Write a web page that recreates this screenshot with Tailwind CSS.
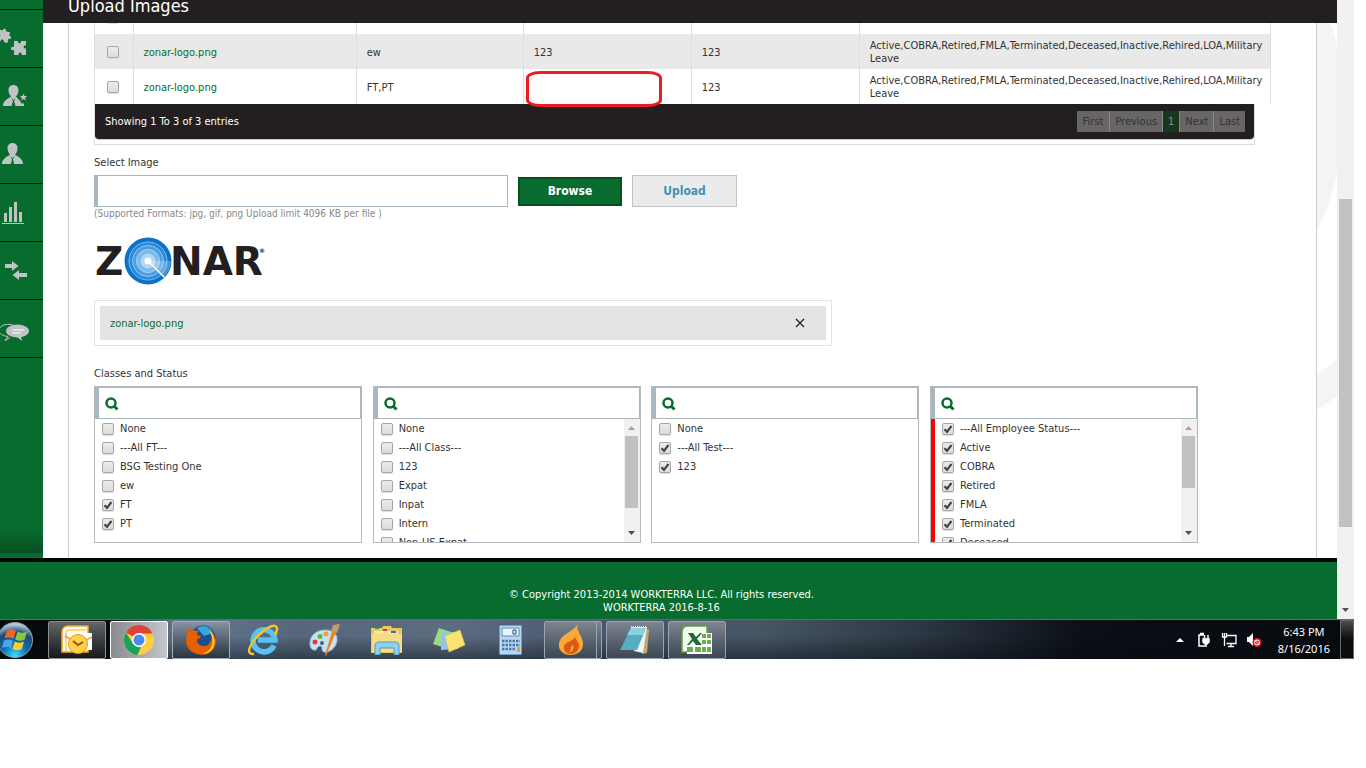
<!DOCTYPE html>
<html lang="en">
<head>
  <meta charset="UTF-8">
  <title>Upload Images</title>
  <script src="https://cdn.jsdelivr.net/npm/@tailwindcss/browser@4"></script>
</head>
<body class="bg-white text-[#333] text-[11px] leading-[13px] font-['DejaVu_Sans_Condensed','Liberation_Sans',sans-serif]">
  <div class="mr-3 overflow-hidden">

    <!-- browser viewport -->
    <div class="flex">
      <div class="flex-1 min-w-0">
        <div class="flex">

          <!-- sidebar -->
          <nav class="w-[43px] shrink-0 bg-[#086c2e] flex flex-col overflow-hidden text-[#bfc3c6]">
            <a href="#" aria-label="Home" class="-mt-12 h-[58px] shrink-0 border-b border-[#06210f]"></a>
            <a href="#" aria-label="Modules" class="h-[58px] shrink-0 border-b border-[#06210f] flex items-center pt-2">
              <svg width="30" height="30" viewBox="0 0 30 30" fill="currentColor">
                <path transform="translate(-3 1) rotate(14 7 7)" d="M1 2h3.500c-1-3 4-3 3 0H12v3.500c3-1 3 4 0 3V13H8c1-3-4-3-3 0H1V9c3 1 3-4 0-3z"/>
                <path transform="translate(11 12)" d="M3 1h4.200c-1.500 3 4 3 2.600 0H15v4.500c-3-1.500-3 4 0 3V15h-4.500c1.500-3.500-4-3.500-2.800 0H3v-5c-4 1.600-4-4.500 0-3z"/>
              </svg>
            </a>
            <a href="#" aria-label="Favourite employee" class="h-[58px] shrink-0 border-b border-[#06210f] flex items-center">
              <svg width="30" height="24" viewBox="0 0 30 24" fill="currentColor">
                <path d="M13.500 0c3.200 0 5 2.200 5 5.200 0 2.600-1 4.800-2.200 5.800v2l-2.800 2-2.800-2v-2C9.500 10 8.500 7.800 8.500 5.200c0-3 1.800-5.200 5-5.200z"/>
                <path d="M10.500 12l2.500 4-1.500 5H3c0-4 2.500-6 7.500-9zM16.500 12l3.500 4 1.500 2.500H24V21h-8.500L14 16z"/>
                <path d="M23.500 8.500l1 2.600 2.700.1-2.100 1.700.7 2.600-2.300-1.500-2.300 1.500.7-2.600-2.100-1.700 2.700-.1z"/>
              </svg>
            </a>
            <a href="#" aria-label="Employee" class="h-[58px] shrink-0 border-b border-[#06210f] flex items-center">
              <svg width="30" height="24" viewBox="0 0 30 24" fill="currentColor">
                <path d="M12.500 0c3.200 0 5 2.200 5 5.200 0 2.600-1 4.800-2.200 5.800v2l-2.800 2-2.800-2v-2C8.500 10 7.500 7.800 7.500 5.200c0-3 1.800-5.200 5-5.200z"/>
                <path d="M9.500 12l2.500 4-1 5H2c0-4 2.500-6 7.500-9zM15.500 12c5 3 7.500 5 7.500 9h-9l-1-5z"/>
              </svg>
            </a>
            <a href="#" aria-label="Reports" class="h-[58px] shrink-0 border-b border-[#06210f] flex items-center">
              <svg width="30" height="24" viewBox="0 0 30 24" fill="currentColor">
                <path d="M4 12h3v9H4zM9 6h3v15H9zM14 1h3v20h-3zM19 11h3v10h-3zM2 22h22v1H2z"/>
              </svg>
            </a>
            <a href="#" aria-label="Transfer" class="h-[58px] shrink-0 border-b border-[#06210f] flex items-center">
              <svg width="30" height="20" viewBox="0 0 30 20" fill="currentColor">
                <path d="M5 3h7V0l6.500 5-6.500 5V7H5zM27 12h-8V9l-6.500 5 6.500 5v-3h8z"/>
              </svg>
            </a>
            <a href="#" aria-label="Messages" class="h-[58px] shrink-0 border-b border-[#06210f] flex items-center pt-2">
              <svg width="30" height="20" viewBox="0 0 30 20" fill="currentColor">
                <path d="M13 2C5 0-1 3-1 7.500c0 3 4 5.500 9 6l-3 4 5-3" fill="none" stroke="currentColor"/>
                <ellipse cx="17.500" cy="8" rx="11.500" ry="6.500"/>
                <path d="M17 14l5 4-1-5z"/>
                <path d="M12 7h12M12 10h9" stroke="#fff"/>
              </svg>
            </a>
            <div class="flex-1"></div>
            <div class="h-6 mb-[5px] bg-linear-to-b from-[#086c2e] to-[#075023]"></div>
          </nav>

          <!-- main column -->
          <main class="flex-1 min-w-0 relative">
            <svg class="absolute right-0 top-0" width="20" height="420" viewBox="0 0 20 420" fill="#f4f4f4">
              <path d="M0 23h13c10 25 14 60 14 80 0 50-10 95-27 127z"/>
              <path d="M0 375l20-16v37L0 410z"/>
            </svg>

            <div class="relative z-10 -mt-3 h-[35px] bg-[#231f20] pl-[25px] flex items-center">
              <h1 class="text-white text-lg">Upload Images</h1>
            </div>

            <div class="relative -mt-6 ml-[25px] mr-5 border-x border-[#ccc] bg-white pl-[25px] pr-[61px] pb-[15px]">
              <!-- image table -->
              <div class="border border-t-0 border-[#ddd] pb-[5px]">
                <table class="w-[calc(100%+17px)] table-fixed border-collapse">
                  <colgroup>
                    <col class="w-[38px]"><col class="w-[19%]"><col class="w-[167px]"><col class="w-[168px]"><col class="w-[168px]"><col class="w-[35%]">
                  </colgroup>
                  <tbody id="images"></tbody>
                </table>
                <div class="h-[35px] bg-[#231f20] rounded-b shadow-[0_1px_0_#ccc] flex items-center justify-between pl-[10px] pr-[9px] text-white">
                  <span>Showing 1 To 3 of 3 entries</span>
                  <div class="flex h-[21px] text-[#333] divide-x divide-[#8a8888]">
                    <button class="bg-[#686566] px-[6px]">First</button>
                    <button class="bg-[#686566] px-[5px]">Previous</button>
                    <button class="bg-[#17381f] px-[5px] text-[#8b8b8b]">1</button>
                    <button class="bg-[#686566] px-[5px]">Next</button>
                    <button class="bg-[#686566] px-[5px]">Last</button>
                  </div>
                </div>
              </div>

              <!-- upload form -->
              <label for="file" class="block mt-[11px]">Select Image</label>
              <div class="mt-[6px] flex items-center gap-[10px]">
                <input id="file" type="text" class="w-[414px] h-8 border border-l-4 border-[#a9b8c0] px-2">
                <button class="w-[104px] h-[29px] bg-[#086c2e] border-2 border-[#05501f] text-white text-xs font-bold">Browse</button>
                <button class="w-[105px] h-8 bg-[#ebebeb] border border-[#c3c3c3] text-[#4690b5] text-xs font-bold">Upload</button>
              </div>
              <p class="text-[10px] text-[#888]">(Supported Formats: jpg, gif, png Upload limit 4096 KB per file )</p>

              <svg class="mt-[14px]" width="176" height="56" viewBox="0 0 176 56" role="img" aria-label="Zonar">
                <g fill="#231f20" class="font-['DejaVu_Sans',sans-serif] font-bold">
                  <text x="1" y="41" font-size="39">Z</text>
                  <text x="76" y="41" font-size="39">NAR</text>
                  <text x="165" y="19" font-size="6">®</text>
                </g>
                <circle cx="54" cy="27" r="23.500" fill="#0a72c8"/>
                <circle cx="54" cy="27" r="19" fill="#2b8ad6" stroke="#7dbcec"/>
                <circle cx="54" cy="27" r="15.500" fill="#4b9fe0" stroke="#8cc4ee"/>
                <circle cx="54" cy="27" r="11.500" fill="#7cbaea" stroke="#a9d4f4"/>
                <circle cx="54" cy="27" r="7.500" fill="#b0d6f4"/>
                <path d="M54 27L77 27A23 23 0 0 1 70 43z" fill="#fff" opacity=".25"/>
                <circle cx="54" cy="27" r="3.500" fill="#fff"/>
                <path d="M54 27l16.500 16.500" stroke="#fff" stroke-width="1.500"/>
              </svg>

              <div class="mt-[10px] w-[738px] border border-[#e3e3e3] p-[5px]">
                <div class="h-[34px] bg-[#e4e4e4] flex items-center justify-between pl-[10px] pr-[21px]">
                  <a href="#" class="text-[#086c2e]">zonar-logo.png</a>
                  <button aria-label="Remove">
                    <svg width="10" height="10" viewBox="0 0 10 10" stroke="#222" stroke-width="1.300"><path d="M1 1l8 8M9 1L1 9"/></svg>
                  </button>
                </div>
              </div>

              <h2 class="mt-[21px]">Classes and Status</h2>
              <div id="lists" class="mt-[6px] flex justify-between w-[1104px]"></div>
            </div>
          </main>
        </div>

        <footer class="border-t-4 border-[#060606] bg-[#086c2e] text-white text-center h-[61px] pt-[26px] pr-[14px]">
          <p>© Copyright 2013-2014 WORKTERRA LLC. All rights reserved.</p>
          <p>WORKTERRA 2016-8-16</p>
        </footer>
      </div>

      <!-- page scrollbar -->
      <div class="w-[17px] shrink-0 bg-[#f1f1f1] flex flex-col items-center pb-[7px]">
        <div class="h-[199px]"></div>
        <div class="h-[328px] w-[13px] bg-[#c1c1c1]"></div>
        <div class="flex-1"></div>
        <svg width="7" height="4" viewBox="0 0 7 4" fill="#505050"><path d="M0 0h7L3.500 4z"/></svg>
      </div>
    </div>

    <!-- taskbar -->
    <div class="h-10 border-t border-[#5b6a70] bg-[linear-gradient(to_bottom,transparent_40%,rgba(5,10,15,0.45)),linear-gradient(to_right,#070a0c_8%,#66788f_13%,#56677c_22%,#5d6d80_33%,#45546a_46%,#475565_56%,#2c3743_68%,#0b0f16_80%,#070b0f)] flex items-center">
      <button aria-label="Start" class="w-12 shrink-0">
        <svg width="35" height="38" viewBox="0 0 35 38">
          <defs>
            <radialGradient id="orb" cx=".5" cy=".95" r=".9"><stop offset="0" stop-color="#3fe0ff"/><stop offset=".4" stop-color="#0d6fae"/><stop offset=".75" stop-color="#1d4a73"/><stop offset="1" stop-color="#b5cbda"/></radialGradient>
          </defs>
          <circle cx="15" cy="19" r="17.500" fill="url(#orb)" stroke="#7ea4bb"/>
          <path d="M7 9.500c3-2 6-1.500 9 .2l-2.500 8c-3-1.500-6-1.700-9-.2z" fill="#f0642c"/>
          <path d="M17.500 10.500c3 1.500 6 1.700 9.500.2l-2.500 8c-3 1.500-6 1.300-9.300-.2z" fill="#8cc63f"/>
          <path d="M4 19.500c3-1.500 6-1.300 9 .2l-2.200 7.500c-3-1.700-5.500-1.700-8.800-.2z" fill="#4aa8e8"/>
          <path d="M14.700 20.500c3 1.500 6 1.700 9.300.2l-2.300 7.500c-3 1.500-6 1.500-9.200-.2z" fill="#ffcc2f"/>
        </svg>
      </button>
      <div class="flex gap-1">
        <button aria-label="Outlook" class="w-[58px] h-[38px] rounded-xs border border-[#8b8f92] bg-linear-to-b from-[#63676a] to-[#17191b] grid place-items-center">
          <svg width="32" height="30" viewBox="0 0 32 30">
            <path d="M1 27V7c0-4 3-6 6-6h20v26z" fill="#fff7df" stroke="#f0a829" stroke-width="1.500"/>
            <path d="M5 26V9c0-3 1-4 4-4h16" fill="none" stroke="#f0b84c"/>
            <path d="M7 8h24v17H7z" fill="#fff"/><path d="M4 11l14 8 13-7" fill="none" stroke="#e8a53a" stroke-width="1.500"/>
            <circle cx="17" cy="19" r="9.500" fill="#ffd24a" stroke="#e09a1c"/><path d="M12 16l5 4 5-3" fill="none" stroke="#8a5a0c" stroke-width="2"/>
          </svg>
        </button>
        <button aria-label="Chrome" class="w-[58px] h-[38px] rounded-xs border border-white bg-linear-to-r from-[#8a8d8f] to-[#c4c7c9] grid place-items-center">
          <svg width="30" height="30" viewBox="0 0 30 30">
            <circle cx="15" cy="15" r="15" fill="#ffcd41"/>
            <path d="M15 15L2 7.500A15 15 0 0 1 28.500 8.500H15z" fill="#db4437"/>
            <path d="M2 7.500L9 18.500l6 3.500-3.500 7.600A15 15 0 0 1 2 7.500z" fill="#1aa15f"/>
            <path d="M9 18.500A7 7 0 0 0 17 22l-3.500 8a15 15 0 0 1-4-1z" fill="#1aa15f"/>
            <circle cx="15" cy="15" r="7" fill="#fff"/><circle cx="15" cy="15" r="5.500" fill="#4a8af4"/>
          </svg>
        </button>
        <button aria-label="Firefox" class="w-[58px] h-[38px] rounded-xs border border-[#a3abb5] bg-linear-to-b from-[#8793a3] to-[#2b3540] grid place-items-center">
          <svg width="32" height="32" viewBox="0 0 32 32">
            <circle cx="18" cy="14" r="12.500" fill="#1a4f94"/><path d="M12 4c6-4 14-1 16 5l-9 3z" fill="#35a7dd"/>
            <path d="M3 3l3 4c2-1 4-1 5 0l4-1c-2 1-3 3-3 5l4 1c0 2-4 3-4 4 0 6 8 8 12 4 4-5 3-11-1-15 7 4 9 11 7 17-3 8-11 10-18 8C3 28-1 19 2 11z" fill="#e66000"/>
            <path d="M24 6c6 5 7 12 4 18-3 4-6 6-10 6 7-3 11-9 9-17z" fill="#ffcb2e"/>
          </svg>
        </button>
        <button aria-label="Internet Explorer" class="w-[58px] h-[38px] grid place-items-center">
          <svg width="32" height="32" viewBox="0 0 32 32" fill="none">
            <path d="M27 21.500A11 11 0 1 1 28 16H11" stroke="#53c4f5" stroke-width="5.500"/>
            <path d="M7 30c-10 1-3-12 6-20C21 2 30-1 30 5c0 2-1 4-2 6" stroke="#f5c426" stroke-width="2.500"/>
          </svg>
        </button>
        <button aria-label="Paint" class="w-[58px] h-[38px] grid place-items-center">
          <svg width="32" height="32" viewBox="0 0 32 32">
            <path d="M1 19C1 11 8 6 16 6c8 0 13 4 12 11s-8 12-13 11c-4-1 0-6-4-6s-2 5-6 4-4-4-4-7z" fill="#c5e3f3" stroke="#8bb8d2"/>
            <circle cx="6" cy="18" r="2.500" fill="#e23b31"/><circle cx="11" cy="12.500" r="2.500" fill="#58b947"/><circle cx="17" cy="10" r="2.500" fill="#f3a22d"/><circle cx="13" cy="19" r="2" fill="#47617a"/>
            <path d="M27 8L17 32l-1-1 7-24z" fill="#ed8522"/><path d="M22 7l2-6 7-1-3 9z" fill="#c79b69"/>
          </svg>
        </button>
        <button aria-label="Explorer" class="w-[58px] h-[38px] grid place-items-center">
          <svg width="34" height="30" viewBox="0 0 34 30">
            <path d="M1 3h11l1-2h8l1 2h10v25H1z" fill="#e8c860"/><path d="M4 6h24v20H4z" fill="#f8e6a0"/><path d="M2 9h30v18H2z" fill="#f5dc85"/>
            <path d="M5 2h4v2H5z" fill="#2c9b3e"/><path d="M13 4h4v2h-4z" fill="#d33"/><path d="M21 6h5v2h-5z" fill="#36c"/>
            <path d="M5 30V21c0-3 2-4 4-4h16c2 0 4 1 4 4v9h-5v-7H10v7z" fill="#8fd0ee" stroke="#4c9cc4"/>
          </svg>
        </button>
        <button aria-label="Sticky Notes" class="w-[58px] h-[38px] grid place-items-center">
          <svg width="34" height="28" viewBox="0 0 34 28">
            <path d="M7 2l15 5-5 16-16-5z" fill="#9bd98a"/><path d="M9 7l16-1 1 17-17 1z" fill="#8fc4f0"/><path d="M13 10l15-6 5 15-16 7z" fill="#fbe36d" stroke="#e5c63e" stroke-width=".5"/>
          </svg>
        </button>
        <button aria-label="Calculator" class="w-[58px] h-[38px] grid place-items-center">
          <svg width="24" height="30" viewBox="0 0 24 30">
            <rect x=".5" y=".5" width="22" height="29" rx="1" fill="#b9d7f2" stroke="#6f9dc8"/><path d="M3 3h17v8H3z" fill="#e9f4fc" stroke="#5d8ab5"/>
            <path d="M14 5h3v4h-3z" fill="none" stroke="#345"/>
            <path d="M3 16h13M3 20h13M3 24h13M17 16h4M17 20h4" stroke="#4b78ac" stroke-width="2.500" stroke-dasharray="2.500 1"/><path d="M18 22h3v5h-3z" fill="#f2962f"/>
          </svg>
        </button>
        <button aria-label="Burn" class="w-[58px] h-[38px] pr-1 rounded-xs border border-[#9aa3ae] bg-linear-to-b from-[#7c8590] to-[#3d4754] grid">
          <span class="grid place-items-center border-r border-[#9aa3ae]">
            <svg width="26" height="31" viewBox="0 0 26 31">
              <path d="M20 0c-3 6 5 12 5 20 0 7-6 11-12 11C5 31 0 26 1 20 2 10 14 9 20 0z" fill="#f9a938"/>
              <path d="M17 12c0 4 5 6 4 11-1 4-4 7-8 7-5 0-8-4-7-8 1-5 10-4 11-10z" fill="#dd5a12"/><path d="M15 21c1 4-1 7-4 7 3-2 1-5 4-7z" fill="#ffc64f"/>
            </svg>
          </span>
        </button>
        <button aria-label="Notepad" class="w-[58px] h-[38px] rounded-xs border border-[#9aa3ae] bg-linear-to-b from-[#7c8590] to-[#3d4754] grid place-items-center">
          <svg width="32" height="30" viewBox="0 0 32 30">
            <path d="M27 3l3 2-2 23-5 1z" fill="#c4a76d"/><path d="M12 2h16l-4 26-9-2z" fill="#edf4f6"/><path d="M12 3h15l-9 22H1z" fill="#55acc4"/><path d="M12 3h15l-3 7H8z" fill="#8ad0de"/><path d="M12 2h15" stroke="#ddd" stroke-width="2" stroke-dasharray="1 1"/>
          </svg>
        </button>
        <button aria-label="Excel" class="w-[58px] h-[38px] rounded-xs border border-[#9aa3ae] bg-linear-to-b from-[#7c8590] to-[#3d4754] grid place-items-center">
          <svg width="32" height="30" viewBox="0 0 32 30">
            <path d="M1 27V7c0-4 3-6 6-6h19v26z" fill="#f3faf0" stroke="#5ea33c" stroke-width="1.500"/>
            <path d="M13 8h18v21H6v-8h7z" fill="#fff"/><path d="M21 9h4v4h-4zM26 9h4v4h-4zM21 15h4v4h-4zM26 15h4v4h-4zM6 22h6v5H6zM14 22h6v5h-6zM21 22h4v5h-4zM26 22h4v5h-4z" fill="#6cae4a"/>
            <path d="M7 8h5l3 4 4-4h2l-5 6 5 6h-6l-3-4-4 4H6l5-6z" fill="#1e6b34"/>
          </svg>
        </button>
      </div>

      <!-- tray -->
      <div class="ml-auto flex items-center h-full text-white">
        <svg class="mr-3" width="8" height="4" viewBox="0 0 8 4" fill="#fff"><path d="M0 4h8L4 0z"/></svg>
        <svg class="mr-[9px]" width="16" height="16" viewBox="0 0 16 16" fill="none" stroke="#fff" stroke-width="1.500">
          <path d="M8 3H3v11h6M4 1.500h4"/><path d="M7 7h6v3l-2 2H9l-2-2zM8.500 3v4M12 3v4M10 12v3" fill="#fff"/>
        </svg>
        <svg class="mr-2" width="17" height="16" viewBox="0 0 17 16" fill="none" stroke="#fff" stroke-width="1.300">
          <path d="M1.500 1v4h4V1M3.500 1v13M6 3.500h9v8H5.500M10 12v2M7 14.500h6"/>
        </svg>
        <svg class="mr-4" width="16" height="16" viewBox="0 0 16 16">
          <path d="M1 5h2l4-4v13l-4-4H1z" fill="#fff"/><circle cx="11" cy="10.500" r="4.500" fill="#d8161c"/><circle cx="11" cy="10.500" r="2.500" fill="none" stroke="#fff"/><path d="M9 8.500l4 4" stroke="#fff"/>
        </svg>
        <div class="text-center leading-[17px] mr-[10px] font-['Noto_Sans',sans-serif]">
          <p>6:43 PM</p>
          <p>8/16/2016</p>
        </div>
        <button aria-label="Show desktop" class="w-[14px] h-[39px] border border-[#63696c] bg-linear-to-b from-[#4a4f52] to-[#0b0d0e] to-50%"></button>
      </div>
    </div>
  </div>

  <script>
    const statuses = 'Active,COBRA,Retired,FMLA,Terminated,Deceased,Inactive,Rehired,LOA,Military Leave';
    const rows = [
      ['BSG Testing One', '', '', ''],
      ['ew', '123', '123', statuses],
      ['FT,PT', '', '123', statuses]
    ];
    const lists = [
      { name: 'FT', items: ['None', '---All FT---', 'BSG Testing One', 'ew', 'FT', 'PT'], checked: [4, 5] },
      { name: 'Class', items: ['None', '---All Class---', '123', 'Expat', 'Inpat', 'Intern', 'Non-US Expat'], checked: [], thumb: 72 },
      { name: 'Test', items: ['None', '---All Test---', '123'], checked: [1, 2] },
      { name: 'Employee Status', items: ['---All Employee Status---', 'Active', 'COBRA', 'Retired', 'FMLA', 'Terminated', 'Deceased'], checked: [0, 1, 2, 3, 4, 5, 6], thumb: 52, required: true }
    ];

    function checkbox(attrs) {
      return `<span class="grid size-3 shrink-0">
        <input type="checkbox" ${attrs} class="peer col-start-1 row-start-1 appearance-none size-3 rounded-xs border border-[#a6a6a6] bg-linear-to-b from-[#ececec] to-[#dcdcdc] shadow-[0_1px_1px_#ddd]">
        <svg class="hidden peer-checked:block col-start-1 row-start-1 pointer-events-none" width="12" height="12" viewBox="0 0 12 12" fill="none" stroke="#444" stroke-width="2.200"><path d="M2.500 6.200L5 8.800 9.500 3"/></svg>
      </span>`;
    }

    document.getElementById('images').innerHTML = rows.map((row, i) => `
      <tr class="h-[35px] ${i % 2 ? 'bg-[#e9e9e9]' : 'bg-white'}">
        <td class="border-r border-[#ddd] pl-3">${checkbox(`aria-label="Select row ${i + 1}"`)}</td>
        <td class="border-r border-[#ddd] pl-[10px] pt-[2px]"><a href="#" class="text-[#086c2e]">zonar-logo.png</a></td>
        <td class="border-r border-[#ddd] pl-[10px] pt-[2px]">${row[0]}</td>
        <td class="border-r border-[#ddd] pl-[10px] pt-[2px] relative">${row[1]}${i === 2 ? '<span class="absolute z-10 left-[2px] top-[2px] w-[136px] h-[36px] border-3 border-[#ed1c24] rounded-[14px/7px]"></span>' : ''}</td>
        <td class="border-r border-[#ddd] pl-[10px] pt-[2px]">${row[2]}</td>
        <td class="border-r border-[#ddd] pl-[10px]">${row[3]}</td>
      </tr>`).join('');

    document.getElementById('lists').innerHTML = lists.map((list, n) => `
      <div class="w-[268px] border border-[#b5b9bb]">
        <div class="relative">
          <input type="text" aria-label="Search ${list.name}" class="block w-full h-8 border border-l-4 border-[#a9b8c0] pl-6">
          <svg class="absolute left-[10px] top-[10px]" width="14" height="14" viewBox="0 0 14 14" fill="none" stroke="#086c2e"><circle cx="6" cy="6" r="4.500" stroke-width="2.500"/><path d="M9 9l3.500 3.500" stroke-width="3"/></svg>
        </div>
        <div class="flex h-[123px] overflow-hidden ${list.required ? 'border-l-4 border-[red]' : ''}">
          <ul class="flex-1 pl-[7px]">${list.items.map((item, i) => `
            <li class="h-[19px] flex items-center">${checkbox(`id="l${n}-${i}" ${list.checked.includes(i) ? 'checked' : ''}`)}<label for="l${n}-${i}" class="pl-[6px]">${item}</label></li>`).join('')}
          </ul>
          ${list.thumb ? `<div class="w-4 bg-[#f1f1f1] flex flex-col items-center py-[7px]">
            <svg width="7" height="4" viewBox="0 0 7 4" fill="#a3a3a3"><path d="M0 4h7L3.500 0z"/></svg>
            <div class="mt-[6px] w-[13px] bg-[#c1c1c1]" style="height: ${list.thumb}px"></div>
            <svg class="mt-auto" width="7" height="4" viewBox="0 0 7 4" fill="#505050"><path d="M0 0h7L3.500 4z"/></svg>
          </div>` : ''}
        </div>
      </div>`).join('');
  </script>
</body>
</html>
